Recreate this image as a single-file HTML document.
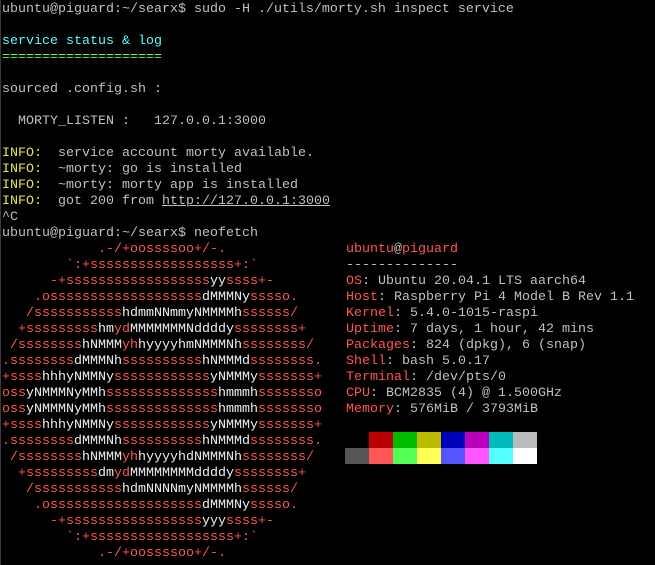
<!DOCTYPE html>
<html><head><meta charset="utf-8"><style>
html,body{margin:0;padding:0;background:#000;width:655px;height:565px;overflow:hidden}
pre{margin:0;font-family:"Liberation Mono",monospace;font-size:13.33px;line-height:16px;color:#c0c0c0;position:absolute;white-space:pre}
.c{color:#55ffff}.g{color:#55ff55}.y{color:#e8e84e}.r{color:#ff5555}.w{color:#f0f0f0}.u{text-decoration:underline}
.b{position:absolute;width:24px;height:16px}
</style></head><body>
<div style="position:absolute;left:0;top:0;width:1px;height:565px;background:#3a3a3a"></div>
<pre style="left:2px;top:2px">ubuntu@piguard:~/searx$ sudo -H ./utils/morty.sh inspect service

<span class="c">service status &amp; log</span>
<span class="g">====================</span>

sourced .config.sh :

  MORTY_LISTEN :   127.0.0.1:3000

<span class="y">INFO:</span>  service account morty available.
<span class="y">INFO:</span>  ~morty: go is installed
<span class="y">INFO:</span>  ~morty: morty app is installed
<span class="y">INFO:</span>  got 200 from <span class="u">http://127.0.0.1:3000</span>
^C
ubuntu@piguard:~/searx$ neofetch
<span class="r">            .-/+oossssoo+/-.
        `:+ssssssssssssssssss+:`
      -+ssssssssssssssssss<span class="w">yy</span>ssss+-
    .osssssssssssssssssss<span class="w">dMMMNy</span>sssso.
   /sssssssssss<span class="w">hdmmNNmmyNMMMMh</span>ssssss/
  +sssssssss<span class="w">hm</span>yd<span class="w">MMMMMMMNddddy</span>ssssssss+
 /ssssssss<span class="w">hNMMM</span>yh<span class="w">hyyyyhmNMMMNh</span>ssssssss/
.ssssssss<span class="w">dMMMNh</span>ssssssssss<span class="w">hNMMMd</span>ssssssss.
+ssss<span class="w">hhhyNMMNy</span>ssssssssssss<span class="w">yNMMMy</span>sssssss+
oss<span class="w">yNMMMNyMMh</span>ssssssssssssss<span class="w">hmmmh</span>ssssssso
oss<span class="w">yNMMMNyMMh</span>ssssssssssssss<span class="w">hmmmh</span>ssssssso
+ssss<span class="w">hhhyNMMNy</span>ssssssssssss<span class="w">yNMMMy</span>sssssss+
.ssssssss<span class="w">dMMMNh</span>ssssssssss<span class="w">hNMMMd</span>ssssssss.
 /ssssssss<span class="w">hNMMM</span>yh<span class="w">hyyyyhdNMMMNh</span>ssssssss/
  +sssssssss<span class="w">dm</span>yd<span class="w">MMMMMMMMddddy</span>ssssssss+
   /sssssssssss<span class="w">hdmNNNNmyNMMMMh</span>ssssss/
    .osssssssssssssssssss<span class="w">dMMMNy</span>sssso.
      -+sssssssssssssssss<span class="w">yyy</span>ssss+-
        `:+ssssssssssssssssss+:`
            .-/+oossssoo+/-.</span></pre>
<pre style="left:346px;top:242px"><span class="r">ubuntu</span>@<span class="r">piguard</span>
--------------
<span class="r">OS</span>: Ubuntu 20.04.1 LTS aarch64
<span class="r">Host</span>: Raspberry Pi 4 Model B Rev 1.1
<span class="r">Kernel</span>: 5.4.0-1015-raspi
<span class="r">Uptime</span>: 7 days, 1 hour, 42 mins
<span class="r">Packages</span>: 824 (dpkg), 6 (snap)
<span class="r">Shell</span>: bash 5.0.17
<span class="r">Terminal</span>: /dev/pts/0
<span class="r">CPU</span>: BCM2835 (4) @ 1.500GHz
<span class="r">Memory</span>: 576MiB / 3793MiB</pre>
<div class="b" style="left:369px;top:432px;background:#bb0000"></div>
<div class="b" style="left:393px;top:432px;background:#00bb00"></div>
<div class="b" style="left:417px;top:432px;background:#bbbb00"></div>
<div class="b" style="left:441px;top:432px;background:#0000bb"></div>
<div class="b" style="left:465px;top:432px;background:#bb00bb"></div>
<div class="b" style="left:489px;top:432px;background:#00bbbb"></div>
<div class="b" style="left:513px;top:432px;background:#bbbbbb"></div>
<div class="b" style="left:345px;top:448px;background:#555555"></div>
<div class="b" style="left:369px;top:448px;background:#ff5555"></div>
<div class="b" style="left:393px;top:448px;background:#55ff55"></div>
<div class="b" style="left:417px;top:448px;background:#ffff55"></div>
<div class="b" style="left:441px;top:448px;background:#5555ff"></div>
<div class="b" style="left:465px;top:448px;background:#ff55ff"></div>
<div class="b" style="left:489px;top:448px;background:#55ffff"></div>
<div class="b" style="left:513px;top:448px;background:#ffffff"></div>
</body></html>
